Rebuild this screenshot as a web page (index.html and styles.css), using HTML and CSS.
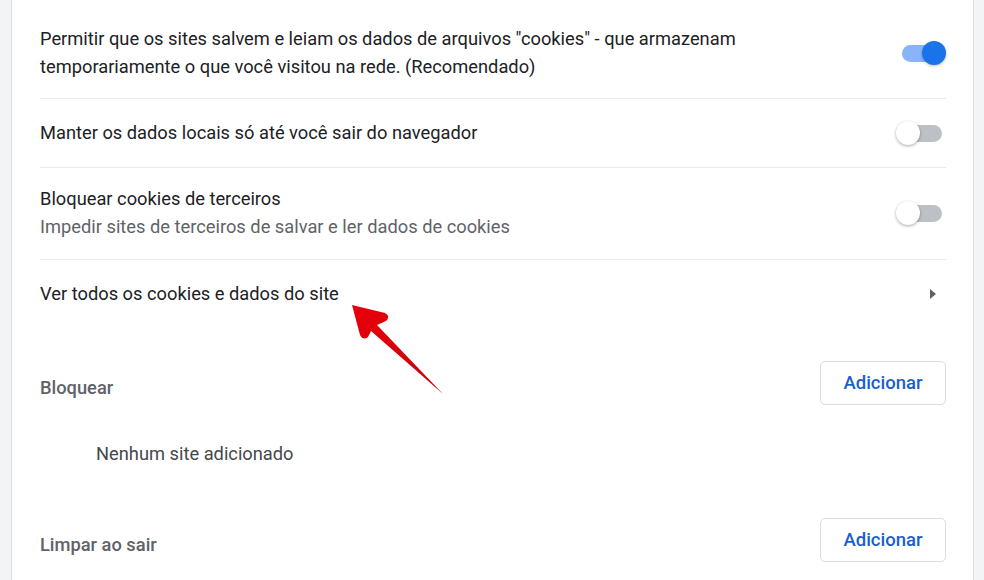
FILE: index.html
```html
<!DOCTYPE html>
<html lang="pt">
<head>
<meta charset="utf-8">
<link rel="stylesheet" href="styles.css">
</head>
<body>
<div class="page">
  <div class="card">
    <div class="row row-1">
      <div class="label">Permitir que os sites salvem e leiam os dados de arquivos "cookies" - que armazenam temporariamente o que você visitou na rede. (Recomendado)</div>
      <div class="toggle on"><span class="track"></span><span class="knob"></span></div>
    </div>
    <div class="row row-2">
      <div class="label">Manter os dados locais só até você sair do navegador</div>
      <div class="toggle off"><span class="track"></span><span class="knob"></span></div>
    </div>
    <div class="row row-3">
      <div class="label">Bloquear cookies de terceiros<div class="sub">Impedir sites de terceiros de salvar e ler dados de cookies</div></div>
      <div class="toggle off"><span class="track"></span><span class="knob"></span></div>
    </div>
    <div class="row row-4">
      <div class="label">Ver todos os cookies e dados do site</div>
      <span class="caret"></span>
    </div>
    <div class="section section-block">
      <div class="heading">Bloquear</div>
      <button class="btn">Adicionar</button>
    </div>
    <div class="empty">Nenhum site adicionado</div>
    <div class="section section-clear">
      <div class="heading">Limpar ao sair</div>
      <button class="btn">Adicionar</button>
    </div>
  </div>
  <svg class="arrow" width="984" height="580" viewBox="0 0 984 580" aria-hidden="true">
    <defs>
      <linearGradient id="ag" x1="0" y1="0" x2="1" y2="1">
        <stop offset="0" stop-color="#e8000c"/>
        <stop offset="1" stop-color="#c8000a"/>
      </linearGradient>
    </defs>
    <path d="M352,305 L385,313 Q391,316 386,321 L377,325 L443,394 L371,331 L368,337 Q363,341 360,335 Z" fill="url(#ag)"/>
  </svg>
</div>
</body>
</html>
```

FILE: styles.css
```css
* { box-sizing: border-box; }
html, body { margin: 0; padding: 0; }
body {
  width: 984px;
  height: 580px;
  overflow: hidden;
  background: #f3f4f6;
  font-family: Roboto, "Liberation Sans", Arial, sans-serif;
  color: #202124;
}
.page {
  position: relative;
  height: 580px;
  padding: 0 10px 0 11px;
}
.card {
  background: #fff;
  height: 580px;
  border-left: 1px solid #dcdcdc;
  border-right: 1px solid #dcdcdc;
  padding: 0 27px 0 28px;
}
.row {
  display: flex;
  align-items: center;
  justify-content: space-between;
  border-bottom: 1px solid #e8eaed;
  font-size: 18.3px;
  line-height: 28px;
}
.label { flex: 1; }
.row-1 .label { max-width: 760px; }
.sub { color: #5f6368; }
.row-1 { padding: 25px 0 17px; }
.row-2 { padding: 20px 0 20px; }
.row-3 { padding: 17px 0 18px; }
.row-4 { padding: 20px 0 20px; border-bottom: none; }

.toggle {
  position: relative;
  width: 46px;
  height: 24px;
  flex: none;
}
.toggle .track {
  position: absolute;
  top: 4px;
  height: 17px;
  width: 37px;
  border-radius: 9px;
}
.toggle .knob {
  position: absolute;
  top: 0;
  width: 24px;
  height: 24px;
  border-radius: 50%;
}
.toggle.on { width: 44px; }
.toggle.on .track { left: 0; background: #8ab4f8; }
.toggle.on .knob { right: 0; background: #1a73e8; box-shadow: 0 1px 3px rgba(0,0,0,.25); }
.toggle.off { margin-right: 4px; }
.toggle.off .track { right: 0; background: #bdc1c6; }
.toggle.off .knob { left: 0; background: #fff; box-shadow: 0 1px 3px rgba(0,0,0,.35); }

.caret {
  width: 0;
  height: 0;
  margin-right: 10px;
  border-top: 5px solid transparent;
  border-bottom: 5px solid transparent;
  border-left: 6px solid #5f6368;
}

.section {
  display: flex;
  align-items: center;
  justify-content: space-between;
}
.section-block { padding-top: 33px; }
.section-clear { padding-top: 50px; }
.heading {
  font-size: 18.3px;
  font-weight: 500;
  color: #5f6368;
  padding-top: 8px;
}
.btn {
  width: 126px;
  height: 44px;
  background: #fff;
  border: 1px solid #dadce0;
  border-radius: 5px;
  font-family: Roboto, "Liberation Sans", Arial, sans-serif;
  font-size: 18.5px;
  font-weight: 500;
  color: #1a5fd0;
  padding: 0;
}
.empty {
  font-size: 18.3px;
  line-height: 28px;
  color: #45484c;
  padding: 35px 0 0 56px;
}
.arrow {
  position: absolute;
  left: 0;
  top: 0;
  pointer-events: none;
}
```
